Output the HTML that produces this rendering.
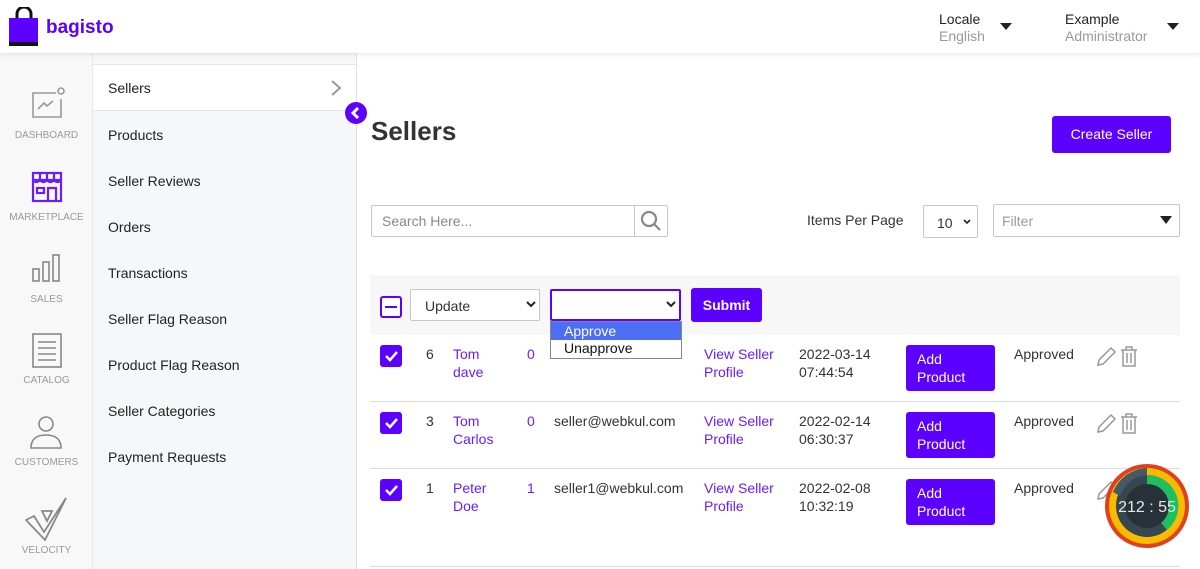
<!DOCTYPE html>
<html><head><meta charset="utf-8"><style>
*{box-sizing:border-box;margin:0;padding:0}
body{width:1200px;height:569px;overflow:hidden;background:#fff;font-family:"Liberation Sans",sans-serif;color:#333;position:relative;font-size:14px}
.a{position:absolute}
.hdr{left:0;top:0;width:1200px;height:53px;background:#fff;box-shadow:0 2px 4px rgba(0,0,0,.08);z-index:2}
.nav{left:0;top:53px;width:93px;height:516px;background:#f8f8f8;border-right:1px solid #e8e8e8}
.nav .it{position:absolute;left:0;width:93px;text-align:center;font-size:10px;color:#999}
.sub{left:93px;top:53px;width:264px;height:516px;background:#f6f7f8;border-right:1px solid #e0e0e0}
.sub div{position:absolute;left:15px;font-size:14px;color:#222}
.v{color:#6b1bff}
.btn{background:#5c00ff;color:#fff;border-radius:3px}
.cb{width:22px;height:22px;background:#5c00ff;border-radius:3px}
.row{left:370px;width:810px;border-bottom:1px solid #ddd}
.t{font-size:14px;line-height:18px}
</style></head><body>
<div class="a hdr">
 <svg class="a" style="left:9px;top:7px" width="30" height="40" viewBox="0 0 30 40"><path d="M8 12V7a7 7 0 0 1 14 0v5" fill="none" stroke="#111" stroke-width="3"/><rect x="0" y="11" width="29" height="27" fill="#5c00ff"/><rect x="0" y="35" width="29" height="4" fill="#111"/></svg>
 <div class="a" style="left:46px;top:17px;font-size:19px;font-weight:bold;color:#5c00ff">bagisto</div>
 <div class="a t" style="left:939px;top:10px;color:#222">Locale</div>
 <div class="a t" style="left:939px;top:27px;color:#999">English</div>
 <div class="a" style="left:1000px;top:23px;border:6px solid transparent;border-top:7px solid #222"></div>
 <div class="a t" style="left:1065px;top:10px;color:#222">Example</div>
 <div class="a t" style="left:1065px;top:27px;color:#999">Administrator</div>
 <div class="a" style="left:1167px;top:23px;border:6px solid transparent;border-top:7px solid #222"></div>
</div>
<div class="a nav">
 <svg class="a" style="left:32px;top:34px" width="33" height="32" viewBox="0 0 33 32" fill="none" stroke="#999" stroke-width="1.6"><path d="M24 6H1v24h28V12"/><path d="M6 22l6-6 3 3 6-5"/><circle cx="29" cy="4" r="3"/></svg>
 <div class="it" style="top:77px">DASHBOARD</div>
 <svg class="a" style="left:31px;top:118px" width="32" height="32" viewBox="0 0 32 32" fill="none" stroke="#6b1bff" stroke-width="2.2"><rect x="2" y="2" width="28" height="28"/><path d="M2 9h28M9 2v7M16 2v7M23 2v7M2 9q3.5 4 7 0q3.5 4 7 0q3.5 4 7 0q3.5 4 7 0"/><rect x="6" y="17" width="7" height="5"/><path d="M17 30V17h8v13"/></svg>
 <div class="it v" style="top:159px">MARKETPLACE</div>
 <svg class="a" style="left:32px;top:201px" width="30" height="28" viewBox="0 0 30 28" fill="none" stroke="#888" stroke-width="1.6"><rect x="1" y="15" width="6" height="12"/><rect x="11" y="8" width="6" height="19"/><rect x="21" y="1" width="6" height="26"/></svg>
 <div class="it" style="top:241px">SALES</div>
 <svg class="a" style="left:32px;top:280px" width="30" height="35" viewBox="0 0 30 35" fill="none" stroke="#888" stroke-width="1.6"><rect x="1" y="1" width="28" height="33"/><path d="M6 9h18M6 15h18M6 21h18M6 27h18"/></svg>
 <div class="it" style="top:322px">CATALOG</div>
 <svg class="a" style="left:30px;top:362px" width="32" height="34" viewBox="0 0 32 34" fill="none" stroke="#888" stroke-width="1.6"><circle cx="16" cy="9" r="7"/><path d="M1 33q0-13 15-13t15 13z"/></svg>
 <div class="it" style="top:404px">CUSTOMERS</div>
 <svg class="a" style="left:25px;top:443px" width="44" height="46" viewBox="0 0 44 46" fill="none" stroke="#888" stroke-width="1.8"><path d="M1 24l8-4 10 16L41 2 20 44z"/><path d="M17 15h10l-5 10z"/></svg>
 <div class="it" style="top:492px">VELOCITY</div>
</div>
<div class="a sub">
 <div style="left:0;top:11px;width:263px;height:47px;background:#fff;border-top:1px solid #e6e6e6;border-bottom:1px solid #e6e6e6"></div>
 <div style="top:27px">Sellers</div>
 <svg class="a" style="left:237px;top:27px" width="12" height="16" viewBox="0 0 12 16"><path d="M2 1l8 7-8 7" fill="none" stroke="#999" stroke-width="2"/></svg>
 <div style="top:74px">Products</div>
 <div style="top:120px">Seller Reviews</div>
 <div style="top:166px">Orders</div>
 <div style="top:212px">Transactions</div>
 <div style="top:258px">Seller Flag Reason</div>
 <div style="top:304px">Product Flag Reason</div>
 <div style="top:350px">Seller Categories</div>
 <div style="top:396px">Payment Requests</div>
</div>
<div class="a" style="left:345px;top:102px;width:22px;height:22px;border-radius:50%;background:#5c00ff;z-index:3"><svg width="22" height="22" viewBox="0 0 22 22"><path d="M13 6l-5 5 5 5" fill="none" stroke="#fff" stroke-width="3"/></svg></div>
<div class="a" style="left:371px;top:116px;font-size:26px;font-weight:bold;color:#333">Sellers</div>
<div class="a btn" style="left:1052px;top:116px;width:119px;height:37px;font-size:14px;line-height:37px;text-align:center">Create Seller</div>
<div class="a" style="left:371px;top:205px;width:297px;height:32px;border:1px solid #c7c7c7;border-radius:2px"></div>
<div class="a" style="left:382px;top:213px;font-size:14px;color:#888">Search Here...</div>
<div class="a" style="left:634px;top:205px;width:1px;height:32px;background:#c7c7c7"></div>
<svg class="a" style="left:640px;top:210px" width="22" height="22" viewBox="0 0 22 22" fill="none" stroke="#888" stroke-width="2.2"><circle cx="9" cy="9" r="7"/><path d="M14 14l6 6"/></svg>
<div class="a" style="left:807px;top:212px;font-size:14px;color:#333">Items Per Page</div>
<div class="a" style="left:923px;top:205px;width:55px;height:33px;border:1px solid #c7c7c7;border-radius:2px;font-size:14px;padding:9px 0 0 13px">10</div>
<svg class="a" style="left:963px;top:219px" width="8" height="6" viewBox="0 0 8 6"><path d="M1 1l3 3 3-3" fill="none" stroke="#222" stroke-width="1.6"/></svg>
<div class="a" style="left:993px;top:204px;width:187px;height:33px;border:1px solid #c7c7c7;border-radius:2px;font-size:14px;color:#999;padding:8px 8px">Filter</div>
<div class="a" style="left:1160px;top:216px;border:6px solid transparent;border-top:8px solid #222"></div>
<div class="a" style="left:370px;top:275px;width:810px;height:60px;background:#f7f7f8"></div>
<div class="a" style="left:380px;top:296px;width:22px;height:22px;border:2px solid #5c00ff;border-radius:3px;background:#fff"><div style="margin:8px 3px;height:2px;background:#5c00ff"></div></div>
<div class="a" style="left:410px;top:289px;width:130px;height:32px;border:1px solid #c7c7c7;border-radius:2px;background:#fff;font-size:14px;padding:8px 14px">Update</div>
<svg class="a" style="left:526px;top:301px" width="10" height="8" viewBox="0 0 10 8"><path d="M1 1l4 4 4-4" fill="none" stroke="#222" stroke-width="2"/></svg>
<div class="a" style="left:550px;top:289px;width:131px;height:32px;border:2px solid #5c00ff;border-radius:2px;background:#fff"></div>
<svg class="a" style="left:666px;top:301px" width="10" height="8" viewBox="0 0 10 8"><path d="M1 1l4 4 4-4" fill="none" stroke="#222" stroke-width="2"/></svg>
<div class="a btn" style="left:691px;top:288px;width:71px;height:34px;font-size:14px;font-weight:bold;line-height:34px;text-align:center">Submit</div>

<div class="a row" style="top:335px;height:67px"></div>
<div class="a row" style="top:402px;height:67px"></div>
<div class="a row" style="top:469px;height:98px"></div>

<div class="a cb" style="left:380px;top:345px"><svg width="22" height="22"><path d="M6 11l4 4 7-8" fill="none" stroke="#fff" stroke-width="2.5"/></svg></div>
<div class="a cb" style="left:380px;top:412px"><svg width="22" height="22"><path d="M6 11l4 4 7-8" fill="none" stroke="#fff" stroke-width="2.5"/></svg></div>
<div class="a cb" style="left:380px;top:479px"><svg width="22" height="22"><path d="M6 11l4 4 7-8" fill="none" stroke="#fff" stroke-width="2.5"/></svg></div>

<div class="a t" style="left:426px;top:345px">6</div>
<div class="a t v" style="left:453px;top:345px">Tom<br>dave</div>
<div class="a t v" style="left:527px;top:345px">0</div>
<div class="a t v" style="left:704px;top:345px">View Seller<br>Profile</div>
<div class="a t" style="left:799px;top:345px">2022-03-14<br>07:44:54</div>
<div class="a btn t" style="left:906px;top:345px;width:89px;height:46px;padding:5px 11px">Add<br>Product</div>
<div class="a t" style="left:1014px;top:345px">Approved</div>

<div class="a t" style="left:426px;top:412px">3</div>
<div class="a t v" style="left:453px;top:412px">Tom<br>Carlos</div>
<div class="a t v" style="left:527px;top:412px">0</div>
<div class="a t" style="left:554px;top:412px">seller@webkul.com</div>
<div class="a t v" style="left:704px;top:412px">View Seller<br>Profile</div>
<div class="a t" style="left:799px;top:412px">2022-02-14<br>06:30:37</div>
<div class="a btn t" style="left:906px;top:412px;width:89px;height:46px;padding:5px 11px">Add<br>Product</div>
<div class="a t" style="left:1014px;top:412px">Approved</div>

<div class="a t" style="left:426px;top:479px">1</div>
<div class="a t v" style="left:453px;top:479px">Peter<br>Doe</div>
<div class="a t v" style="left:527px;top:479px">1</div>
<div class="a t" style="left:554px;top:479px">seller1@webkul.com</div>
<div class="a t v" style="left:704px;top:479px">View Seller<br>Profile</div>
<div class="a t" style="left:799px;top:479px">2022-02-08<br>10:32:19</div>
<div class="a btn t" style="left:906px;top:479px;width:89px;height:46px;padding:5px 11px">Add<br>Product</div>
<div class="a t" style="left:1014px;top:479px">Approved</div>

<svg class="a" style="left:1096px;top:345px" width="44" height="22" viewBox="0 0 44 22" fill="none" stroke="#999" stroke-width="1.5"><path d="M2 20l1-5L15 3l4 4L7 19z"/><path d="M25 5h16M30 5V2h6v3M27 5v16h12V5M31 8v10M35 8v10"/></svg>
<svg class="a" style="left:1096px;top:412px" width="44" height="22" viewBox="0 0 44 22" fill="none" stroke="#999" stroke-width="1.5"><path d="M2 20l1-5L15 3l4 4L7 19z"/><path d="M25 5h16M30 5V2h6v3M27 5v16h12V5M31 8v10M35 8v10"/></svg>
<svg class="a" style="left:1096px;top:479px" width="20" height="22" viewBox="0 0 20 22" fill="none" stroke="#999" stroke-width="1.5"><path d="M2 20l1-5L15 3l4 4L7 19z"/></svg>

<div class="a" style="left:550px;top:321px;width:132px;height:38px;border:1px solid #888;background:#fff;z-index:4;font-size:14px">
 <div style="background:#4c6ef5;color:#fff;padding:1px 13px;height:18px">Approve</div>
 <div style="padding:0 13px;color:#111">Unapprove</div>
</div>

<svg class="a" style="left:1103px;top:462px;z-index:5" width="88" height="88" viewBox="0 0 88 88">
 <circle cx="44" cy="44" r="42" fill="#e0401f"/>
 <circle cx="44" cy="44" r="38" fill="#f7bb00"/>
 <circle cx="44" cy="44" r="31" fill="#37474f"/>
 <path d="M44 13A31 31 0 0 1 64 68L44 44Z" fill="#1dbf60"/>
 <path d="M44 6A38 38 0 0 0 10 30L17 34A31 31 0 0 1 44 13Z" fill="#455a64"/>
 <circle cx="44" cy="44" r="22" fill="#263238"/>
 <text x="44" y="50" text-anchor="middle" font-family="Liberation Sans" font-size="16" fill="#e8e8e8">212 : 55</text>
</svg>
</body></html>
